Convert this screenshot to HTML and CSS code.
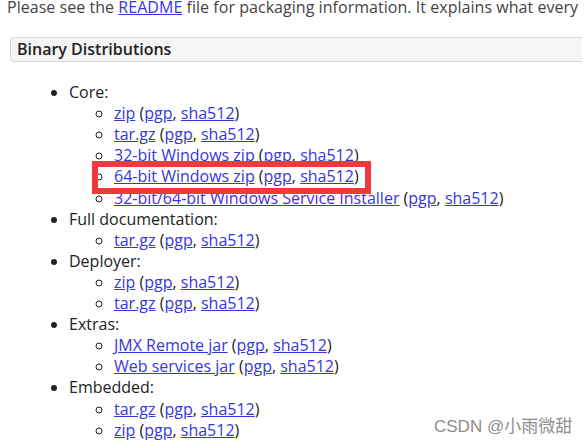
FILE: index.html
```html
<!DOCTYPE html>
<html>
<head>
<meta charset="utf-8">
<link rel="stylesheet" href="styles.css">
</head>
<body>
<div class="page">
  <p class="intro">Please see the <a href="#">README</a> file for packaging information. It explains what every</p>
  <h3 class="section">Binary Distributions</h3>
  <ul class="dist">
    <li>Core:
      <ul>
        <li><a href="#">zip</a> (<a href="#">pgp</a>, <a href="#">sha512</a>)</li>
        <li><a href="#">tar.gz</a> (<a href="#">pgp</a>, <a href="#">sha512</a>)</li>
        <li><a href="#">32-bit Windows zip</a> (<a href="#">pgp</a>, <a href="#">sha512</a>)</li>
        <li><span class="marked"><a href="#">64-bit Windows zip</a> (<a href="#">pgp</a>, <a href="#">sha512</a>)</span></li>
        <li><a href="#">32-bit/64-bit Windows Service Installer</a> (<a href="#">pgp</a>, <a href="#">sha512</a>)</li>
      </ul>
    </li>
    <li>Full documentation:
      <ul>
        <li><a href="#">tar.gz</a> (<a href="#">pgp</a>, <a href="#">sha512</a>)</li>
      </ul>
    </li>
    <li>Deployer:
      <ul>
        <li><a href="#">zip</a> (<a href="#">pgp</a>, <a href="#">sha512</a>)</li>
        <li><a href="#">tar.gz</a> (<a href="#">pgp</a>, <a href="#">sha512</a>)</li>
      </ul>
    </li>
    <li>Extras:
      <ul>
        <li><a href="#">JMX Remote jar</a> (<a href="#">pgp</a>, <a href="#">sha512</a>)</li>
        <li><a href="#">Web services jar</a> (<a href="#">pgp</a>, <a href="#">sha512</a>)</li>
      </ul>
    </li>
    <li>Embedded:
      <ul>
        <li><a href="#">tar.gz</a> (<a href="#">pgp</a>, <a href="#">sha512</a>)</li>
        <li><a href="#">zip</a> (<a href="#">pgp</a>, <a href="#">sha512</a>)</li>
      </ul>
    </li>
  </ul>
</div>
<div class="watermark">CSDN @小雨微甜</div>
</body>
</html>
```
FILE: styles.css
```css
html, body {
  margin: 0;
  padding: 0;
  background: #fff;
  overflow: hidden;
}
body {
  width: 586px;
  height: 448px;
  position: relative;
  font-family: "Open Sans", "Liberation Sans", sans-serif;
  font-size: 16px;
  line-height: 21.1px;
  color: #222;
}
a {
  color: #3636e0;
  text-decoration: underline;
}
.page {
  padding-left: 7px;
}
.intro {
  margin: -3px 0 0 0;
  color: #444;
  white-space: nowrap;
  letter-spacing: 0.04px;
}
.section {
  margin: 19px 0 0 3px;
  padding: 1px 6px;
  height: 21px;
  font-size: 16px;
  font-weight: 600;
  line-height: 21px;
  color: #222;
  background: #f5f5f5;
  border: 1px solid #d6d6d6;
  border-right: none;
  border-radius: 4px 0 0 4px;
  width: 559px;
  box-sizing: content-box;
}
.dist {
  margin: 20px 0 0 0;
  padding-left: 62px;
  list-style: disc;
}
.dist ul {
  margin: 0;
  padding-left: 45px;
  list-style: circle;
}
.dist li {
  white-space: nowrap;
}
.marked {
  position: relative;
}
.marked::after {
  content: "";
  position: absolute;
  left: -22px;
  right: -12px;
  top: -4px;
  bottom: -7px;
  border: 6px solid #ee3a3c;
  pointer-events: none;
}
.watermark {
  position: absolute;
  left: 434px;
  top: 417px;
  font-family: "Liberation Sans", "Noto Sans CJK SC", sans-serif;
  font-size: 17px;
  line-height: 20px;
  color: #8e8e8e;
}
```
